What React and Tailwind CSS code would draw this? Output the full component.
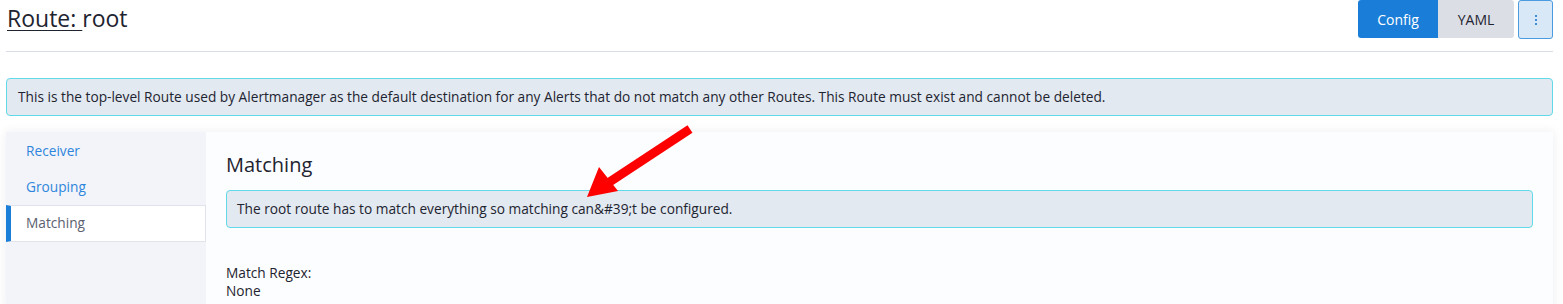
import React from "react";

export default function App() {
  return (
    <div className="relative min-h-[304px] bg-white pl-[6px] pr-[10px] text-[#1e2430]" style={{ fontFamily: "'Open Sans', sans-serif" }}>
      {/* Header */}
      <div className="flex items-start justify-between border-b border-[#d9dde7] h-[52px]">
        <h1 className="pl-[1px] pt-[3px] text-[23px] leading-[30px]">
          <span className="underline underline-offset-[3px] decoration-1">Route: </span>
          root
        </h1>
        <div className="flex items-start gap-[4px]">
          <div className="flex h-[38px] overflow-hidden rounded-[3px]">
            <button className="w-[80px] bg-[#1a7ed8] text-[14px] text-white">Config</button>
            <button className="w-[76px] bg-[#dcdee6] text-[14px] text-[#1e2430]">YAML</button>
          </div>
          <button className="flex h-[39px] w-[35px] flex-col items-center justify-center gap-[2px] rounded-[3px] border border-[#4a9be0] bg-[#d8e8f6]">
            <span className="h-[2px] w-[2px] bg-[#3d8fd9]" />
            <span className="h-[2px] w-[2px] bg-[#3d8fd9]" />
            <span className="h-[2px] w-[2px] bg-[#3d8fd9]" />
          </button>
        </div>
      </div>

      {/* Top-level info */}
      <div className="mt-[26px] flex h-[38px] items-center rounded-[4px] border border-[#62d9e9] bg-[#e2e9f0] px-[11px] text-[13.7px]">
        This is the top-level Route used by Alertmanager as the default destination for any Alerts that do not match any other Routes. This Route must exist and cannot be deleted.
      </div>

      {/* Panel */}
      <div className="mt-[16px] flex min-h-[180px] shadow-[0_0_10px_rgba(30,40,80,0.08)]">
        <nav className="w-[200px] shrink-0 bg-[#f3f4f9] pt-[1px] text-[13.7px]">
          <div className="flex h-[36px] items-center pl-[20px] text-[#2e86dc]">Receiver</div>
          <div className="flex h-[36px] items-center pl-[20px] text-[#2e86dc]">Grouping</div>
          <div className="flex h-[37px] items-center border border-l-[5px] border-[#e1e3ea] border-l-[#1a7ed8] bg-white pl-[15px] text-[#5b6170]">
            Matching
          </div>
        </nav>
        <main className="flex-1 bg-[#fcfdfe] pl-[20px] pr-[20px] pt-[20px]">
          <h2 className="text-[20px] leading-[26px]">Matching</h2>
          <div className="mt-[12px] flex h-[38px] items-center rounded-[4px] border border-[#62d9e9] bg-[#e2e9f0] px-[10px] text-[13.7px]">
            The root route has to match everything so matching can&amp;#39;t be configured.
          </div>
          <div className="mt-[36px] text-[13.7px] leading-[18px]">
            <div>Match Regex:</div>
            <div>None</div>
          </div>
        </main>
      </div>

      {/* Annotation arrow */}
      <svg className="pointer-events-none absolute left-0 top-0" width="1563" height="304">
        <line x1="690" y1="129" x2="608" y2="183" stroke="#ff0000" strokeWidth="9" />
        <polygon points="587,197 599,167 618,191" fill="#ff0000" />
      </svg>
    </div>
  );
}
